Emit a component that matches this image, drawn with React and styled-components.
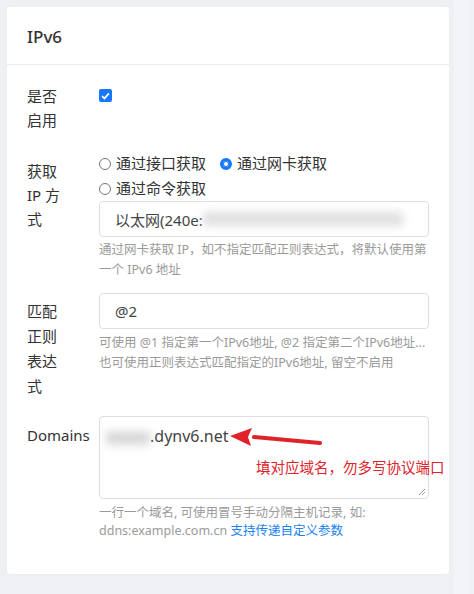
import React from 'react'
import styled, { createGlobalStyle } from 'styled-components'

const GlobalStyle = createGlobalStyle`
  html, body {
    margin: 0;
    padding: 0;
    background: #eff0f4;
  }
  body {
    font-family: "Noto Sans", "Noto Sans CJK SC", sans-serif;
    color: #333;
  }
`

const StyledPage = styled.div`
  display: flex;
  width: 474px;
  height: 594px;
  padding: 7px 0 0 7px;
  box-sizing: border-box;
  overflow: hidden;
`

const StyledCard = styled.section`
  width: 442px;
  height: 567px;
  background: #fff;
  border-radius: 3px;
  box-shadow: 0 0 2px rgba(0, 0, 0, 0.04);
`

const StyledScrollTrack = styled.div`
  width: 16px;
  margin-left: 5px;
  margin-top: -7px;
  height: 594px;
  background: #f3f4f7;
`

const StyledHeader = styled.h2`
  margin: 0;
  padding: 3px 20px 0;
  height: 54px;
  line-height: 54px;
  font-size: 17px;
  font-weight: 500;
  color: #333;
  border-bottom: 1px solid #e9eaee;
`

const StyledBody = styled.div`
  padding: 19px 20px 0;
  display: flex;
  flex-direction: column;
`

const StyledRow = styled.div`
  display: flex;
  align-items: flex-start;
  margin-top: ${(p) => p.$gap || 0}px;
`

const StyledLabel = styled.label`
  width: 36px;
  flex: 0 0 36px;
  margin-right: 36px;
  font-size: 15px;
  line-height: ${(p) => p.$lh || 24}px;
  padding-top: ${(p) => p.$top || 0}px;
  color: #333;
  white-space: ${(p) => (p.$nowrap ? 'nowrap' : 'normal')};
`

const StyledControl = styled.div`
  flex: 0 0 330px;
  display: flex;
  flex-direction: column;
  position: relative;
`

const StyledCheck = styled.span`
  display: inline-flex;
  align-items: center;
  justify-content: center;
  width: 13px;
  height: 13px;
  margin-top: 5px;
  border-radius: 2px;
  background: #1677ff;
`

const StyledRadios = styled.div`
  display: flex;
  flex-wrap: wrap;
  column-gap: 14px;
  row-gap: 2px;
  font-size: 15px;
  line-height: 23px;
`

const StyledRadio = styled.span`
  display: inline-flex;
  align-items: center;
  gap: 5px;
  color: #333;
  &::before {
    content: '';
    width: 12px;
    height: 12px;
    border-radius: 50%;
    box-sizing: border-box;
    border: ${(p) => (p.$on ? '3px solid #1677ff' : '1px solid #777')};
    background: #fff;
    box-shadow: ${(p) => (p.$on ? 'inset 0 0 0 1px #1677ff' : 'none')};
  }
`

const StyledInput = styled.div`
  box-sizing: border-box;
  height: 36px;
  border: 1px solid #dcdfe6;
  border-radius: 4px;
  padding: 0 15px;
  display: flex;
  align-items: center;
  font-size: 15px;
  color: #444;
  overflow: hidden;
  white-space: nowrap;
  margin-top: ${(p) => p.$top || 0}px;
`

const StyledTextarea = styled.div`
  box-sizing: border-box;
  height: 83px;
  border: 1px solid #dcdfe6;
  border-radius: 4px;
  padding: 8px 6px;
  font-size: 16px;
  line-height: 22px;
  color: #444;
  position: relative;
`

const StyledBlur = styled.span`
  display: inline-block;
  width: ${(p) => p.$w}px;
  height: 14px;
  vertical-align: middle;
  background: ${(p) => p.$bg || '#d8d8d8'};
  filter: blur(4px);
  opacity: 0.8;
`

const StyledGrip = styled.svg`
  position: absolute;
  right: 2px;
  bottom: 2px;
`

const StyledHelp = styled.p`
  margin: ${(p) => p.$top || 6}px 0 0;
  font-size: 12.5px;
  line-height: ${(p) => p.$lh || 20}px;
  color: #9a9a9a;
  white-space: ${(p) => (p.$nowrap ? 'nowrap' : 'normal')};
`

const StyledLink = styled.a`
  color: #1a7ff0;
  text-decoration: none;
`

const StyledNote = styled.div`
  position: absolute;
  left: 157px;
  top: 40px;
  font-size: 14.5px;
  color: #e0232b;
  white-space: nowrap;
`

const StyledArrow = styled.svg`
  position: absolute;
  left: 129px;
  top: 10px;
`

const CheckMark = () => (
  <svg width="9" height="8" viewBox="0 0 9 8">
    <path d="M1 4.2 L3.4 6.4 L8 1.4" stroke="#fff" strokeWidth="1.8" fill="none" />
  </svg>
)

const App = () => (
  <StyledPage>
    <GlobalStyle />
    <StyledCard>
      <StyledHeader>IPv6</StyledHeader>
      <StyledBody>
        <StyledRow>
          <StyledLabel $lh={24}>是否启用</StyledLabel>
          <StyledControl>
            <StyledCheck>
              <CheckMark />
            </StyledCheck>
          </StyledControl>
        </StyledRow>

        <StyledRow $gap={20}>
          <StyledLabel $lh={24} $top={7}>获取IP 方式</StyledLabel>
          <StyledControl>
            <StyledRadios>
              <StyledRadio>通过接口获取</StyledRadio>
              <StyledRadio $on>通过网卡获取</StyledRadio>
              <StyledRadio>通过命令获取</StyledRadio>
            </StyledRadios>
            <StyledInput $top={1}>
              以太网(240e:
              <StyledBlur $w={200} />
            </StyledInput>
            <StyledHelp $top={3}>
              通过网卡获取 IP，如不指定匹配正则表达式，将默认使用第一个 IPv6 地址
            </StyledHelp>
          </StyledControl>
        </StyledRow>

        <StyledRow $gap={13}>
          <StyledLabel $lh={25} $top={6}>匹配正则表达式</StyledLabel>
          <StyledControl>
            <StyledInput>@2</StyledInput>
            <StyledHelp $top={4} $nowrap>
              可使用 @1 指定第一个IPv6地址, @2 指定第二个IPv6地址...
              <br />
              也可使用正则表达式匹配指定的IPv6地址, 留空不启用
            </StyledHelp>
          </StyledControl>
        </StyledRow>

        <StyledRow $gap={17}>
          <StyledLabel $lh={24} $top={7} $nowrap>Domains</StyledLabel>
          <StyledControl>
            <StyledTextarea>
              <StyledBlur $w={44} $bg="#cfcfcf" />
              .dynv6.net
              <StyledGrip width="8" height="8" viewBox="0 0 8 8">
                <path d="M7 1 L1 7 M7 4 L4 7" stroke="#999" strokeWidth="1" />
              </StyledGrip>
            </StyledTextarea>
            <StyledArrow width="96" height="24" viewBox="0 0 96 24">
              <path d="M26 11 L92 17" stroke="#e0232b" strokeWidth="4" strokeLinecap="round" />
              <path d="M2 10 L24 2 L20 11 L23 20 Z" fill="#e0232b" />
            </StyledArrow>
            <StyledNote>填对应域名，勿多写协议端口</StyledNote>
            <StyledHelp $top={5} $lh={18}>
              一行一个域名, 可使用冒号手动分隔主机记录, 如:
              <br />
              ddns:example.com.cn <StyledLink href="#">支持传递自定义参数</StyledLink>
            </StyledHelp>
          </StyledControl>
        </StyledRow>
      </StyledBody>
    </StyledCard>
    <StyledScrollTrack />
  </StyledPage>
)

export default App
